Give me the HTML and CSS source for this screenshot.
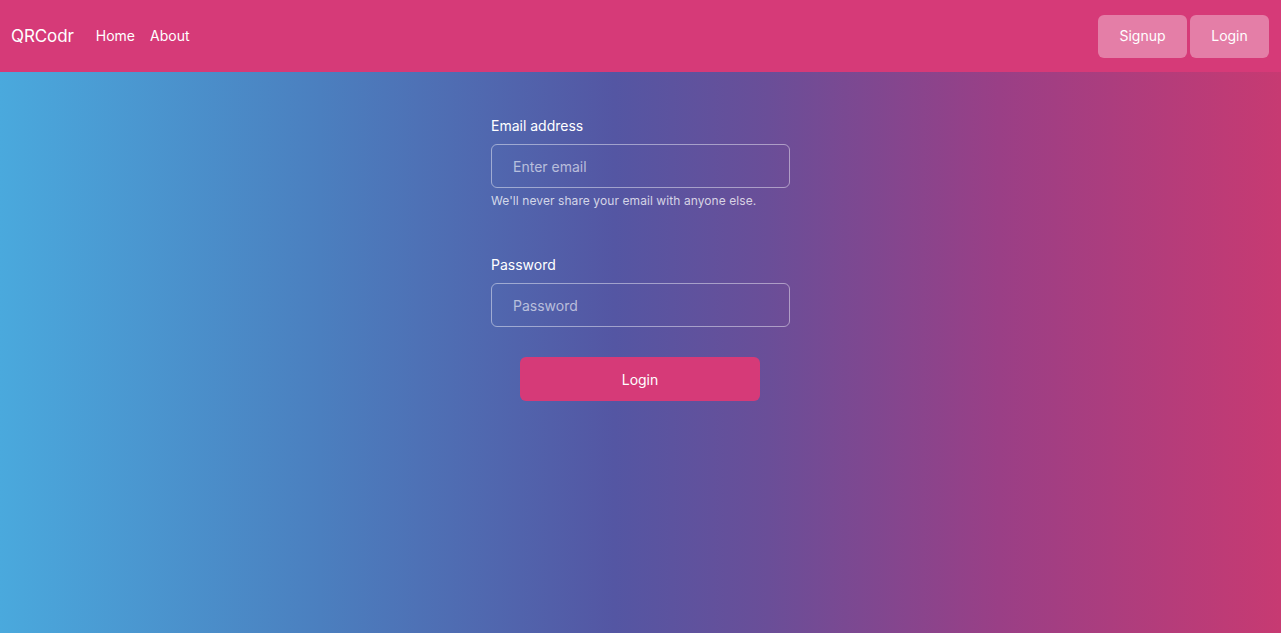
FILE: index.html
```html
<!DOCTYPE html>
<html lang="en">
<head>
<meta charset="utf-8">
<title>QRCodr</title>
<link rel="stylesheet" href="styles.css">
</head>
<body>
<header class="navbar">
  <div class="nav-left">
    <a class="brand" href="#">QRCodr</a>
    <nav class="links">
      <a href="#">Home</a>
      <a href="#">About</a>
    </nav>
  </div>
  <div class="nav-right">
    <button class="nav-btn signup">Signup</button>
    <button class="nav-btn login">Login</button>
  </div>
</header>
<main class="page">
  <form class="form">
    <div class="group">
      <label class="label">Email address</label>
      <input class="input" type="email" placeholder="Enter email">
      <small class="help">We'll never share your email with anyone else.</small>
    </div>
    <div class="group group-pw">
      <label class="label">Password</label>
      <input class="input" type="password" placeholder="Password">
    </div>
    <button class="submit" type="button">Login</button>
  </form>
</main>
</body>
</html>
```
FILE: styles.css
```css
* { box-sizing: border-box; }
html, body { margin: 0; height: 100%; }
body {
  font-family: Inter, "Noto Sans", "Liberation Sans", sans-serif;
  color: #fff;
  display: flex;
  flex-direction: column;
  background: linear-gradient(90deg, #4aa9dd 0%, #4b7fbf 25%, #5456a3 48%, #6a4e98 60%, #9a3f86 78%, #c73a72 100%);
}
.navbar {
  height: 72px;
  flex: none;
  background: #d63a78;
  display: flex;
  align-items: center;
  justify-content: space-between;
  padding: 0 12px 0 11px;
}
.nav-left { display: flex; align-items: center; gap: 22px; padding-bottom: 1px; }
.brand {
  color: #fff;
  text-decoration: none;
  font-size: 17px;
  letter-spacing: -0.1px;
}
.links { display: flex; gap: 15px; }
.links a { color: #fff; text-decoration: none; font-size: 14px; }
.nav-right { display: flex; gap: 3px; }
.nav-btn {
  font-family: inherit;
  font-size: 14px;
  color: #fff;
  background: rgba(255,255,255,0.35);
  border: none;
  border-radius: 6px;
  height: 43px;
  padding: 0 0 1px;
}
.signup { width: 89px; }
.login { width: 79px; }
.page {
  flex: 1;
  display: flex;
  justify-content: center;
  padding-top: 45px;
}
.form { width: 299px; display: flex; flex-direction: column; }
.group { display: flex; flex-direction: column; }
.group-pw { margin-top: 48px; }
.label { font-size: 14px; line-height: 18px; margin-bottom: 9px; }
.input {
  height: 44px;
  border: 1px solid rgba(255,255,255,0.45);
  border-radius: 6px;
  background: transparent;
  color: #fff;
  font-family: inherit;
  font-size: 14px;
  padding: 0 21px;
  outline: none;
}
.input::placeholder { color: rgba(255,255,255,0.6); }
.help {
  font-size: 12px;
  letter-spacing: 0.08px;
  color: rgba(255,255,255,0.75);
  margin-top: 6px;
  line-height: 14px;
}
.submit {
  align-self: center;
  width: 240px;
  height: 44px;
  margin-top: 30px;
  margin-right: 1px;
  background: #d63a78;
  color: #fff;
  border: none;
  border-radius: 6px;
  font-family: inherit;
  font-size: 14px;
}
```
